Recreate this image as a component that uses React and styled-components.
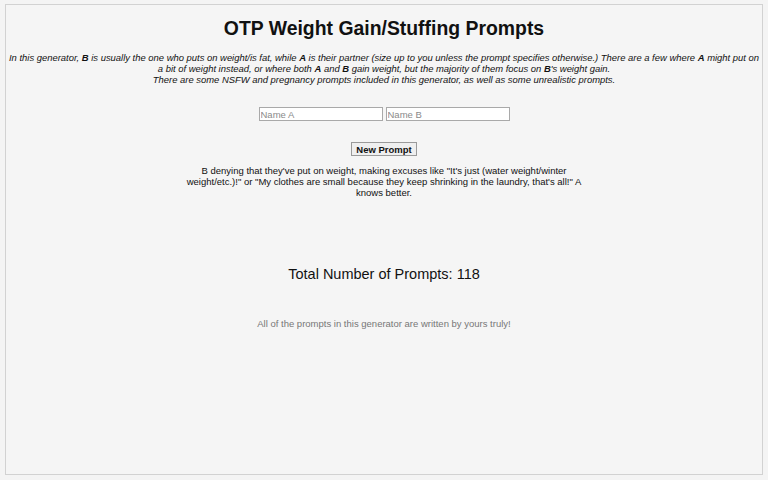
import React from "react";
import styled, { createGlobalStyle } from "styled-components";

const GlobalStyle = createGlobalStyle`
  html, body {
    margin: 0;
    background: #f4f4f4;
  }
  body {
    font-family: "Liberation Sans", Arial, sans-serif;
    color: #111;
  }
`;

const Frame = styled.div`
  box-sizing: border-box;
  margin: 4px 5px 0 5px;
  height: 471px;
  border: 1px solid #d2d2d2;
  background: #f5f5f5;
  text-align: center;
  padding-top: 11px;
`;

const Title = styled.h1`
  margin: 0;
  font-size: 19.4px;
  line-height: 24px;
  font-weight: bold;
`;

const Intro = styled.p`
  margin: 12px 0 0 0;
  font-size: 9.44px;
  line-height: 11px;
  font-style: italic;
  b {
    font-weight: bold;
  }
`;

const NameRow = styled.div`
  display: flex;
  justify-content: center;
  gap: 3px;
  margin-top: 22px;
`;

const NameInput = styled.input`
  box-sizing: border-box;
  width: 124px;
  height: 14px;
  padding: 0 1px;
  font-family: "Liberation Sans", Arial, sans-serif;
  font-size: 9.5px;
  border: 1px solid #a9a9a9;
  background: #fff;
  &::placeholder {
    color: #8a8a8a;
  }
`;

const PromptButton = styled.button`
  box-sizing: border-box;
  display: block;
  margin: 21px auto 0;
  height: 14px;
  padding: 0 4px;
  font-family: "Liberation Sans", Arial, sans-serif;
  font-size: 9.5px;
  font-weight: bold;
  color: #111;
  background: #efefef;
  border: 1px solid #9a9a9a;
`;

const PromptText = styled.p`
  max-width: 400px;
  margin: 9px auto 0;
  font-size: 9.5px;
  line-height: 11px;
`;

const Total = styled.h2`
  margin: 67px 0 0 0;
  font-size: 14.5px;
  line-height: 18px;
  font-weight: normal;
`;

const Credit = styled.p`
  margin: 35px 0 0 0;
  font-size: 9.5px;
  line-height: 11px;
  color: #777;
`;

export default function App() {
  return (
    <>
      <GlobalStyle />
      <Frame>
        <Title>OTP Weight Gain/Stuffing Prompts</Title>
        <Intro>
          In this generator, <b>B</b> is usually the one who puts on weight/is fat, while <b>A</b> is
          their partner (size up to you unless the prompt specifies otherwise.) There are a few where{" "}
          <b>A</b> might put on a bit of weight instead, or where both <b>A</b> and <b>B</b> gain
          weight, but the majority of them focus on <b>B</b>'s weight gain.
          <br />
          There are some NSFW and pregnancy prompts included in this generator, as well as some
          unrealistic prompts.
        </Intro>
        <NameRow>
          <NameInput placeholder="Name A" />
          <NameInput placeholder="Name B" />
        </NameRow>
        <PromptButton>New Prompt</PromptButton>
        <PromptText>
          B denying that they've put on weight, making excuses like "It's just (water weight/winter
          weight/etc.)!" or "My clothes are small because they keep shrinking in the laundry, that's
          all!" A knows better.
        </PromptText>
        <Total>Total Number of Prompts: 118</Total>
        <Credit>All of the prompts in this generator are written by yours truly!</Credit>
      </Frame>
    </>
  );
}
